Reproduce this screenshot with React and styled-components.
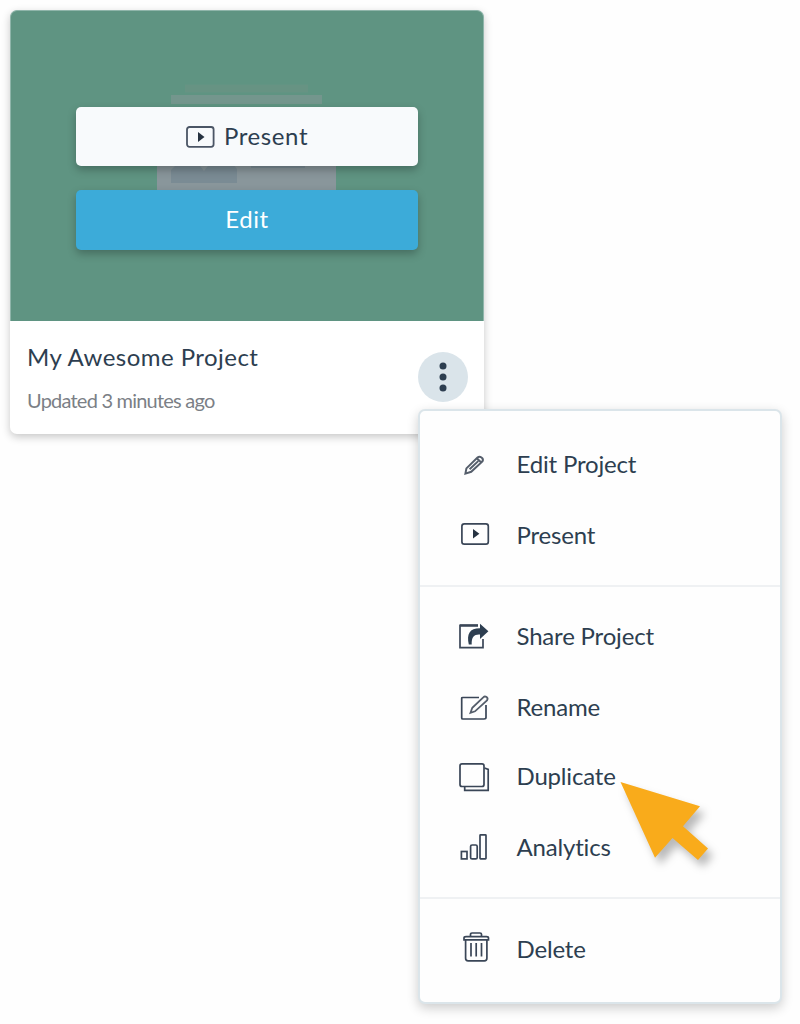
import React, { useState } from "react";
import styled, { createGlobalStyle } from "styled-components";

const GlobalStyle = createGlobalStyle`
    * {
        box-sizing: border-box;
    }
    body {
        margin: 0;
        background: #fefefe;
        font-family: 'Lato', sans-serif;
        color: #2d3e50;
    }
`

const Page = styled.div`
    height: 1024px;
    padding: 10px;
    overflow: hidden;
`

const Card = styled.div`
    width: 474px;
    height: 424px;
    display: flex;
    flex-direction: column;
    background: white;
    border-radius: 7px;
    box-shadow: 0 3px 9px rgba(0, 0, 0, 0.22);
`

const Thumbnail = styled.div`
    position: relative;
    height: 311px;
    padding: 96px 66px 0;
    display: flex;
    flex-direction: column;
    gap: 24px;
    background: #5f9482;
    border: 1px solid #8fb5aa;
    border-width: 1px 1px 0;
    border-radius: 7px 7px 0 0;
`

const Artwork = styled.svg`
    position: absolute;
    left: 146px;
    top: 73px;
`

const CardButton = styled.button`
    position: relative;
    width: 342px;
    height: ${({$primary}) => ($primary ? '60px' : '59px')};
    margin: 0 0 0 -1px;
    padding: 0 0 3px;
    flex-shrink: 0;
    display: flex;
    justify-content: center;
    align-items: center;
    gap: 9px;
    border: none;
    border-radius: 5px;
    background: ${({$primary}) => ($primary ? '#3cabd9' : '#f8fafc')};
    color: ${({$primary}) => ($primary ? 'white' : '#2d3e50')};
    font: 400 24px 'Lato', sans-serif;
    letter-spacing: 0.6px;
    box-shadow: 0 4px 9px rgba(0, 0, 0, 0.26);
    cursor: pointer;
    svg {
        margin-top: 3px;
    }
`

const Info = styled.div`
    flex: 1;
    padding: 0 16px 0 17px;
    display: flex;
    justify-content: space-between;
`

const Title = styled.p`
    margin: 0;
    padding-top: 21px;
    font-size: 24px;
    line-height: 30px;
    letter-spacing: 0.46px;
`

const Updated = styled.p`
    margin: 0;
    padding-top: 16px;
    font-size: 20px;
    line-height: 24px;
    letter-spacing: -0.78px;
    color: #7b7f86;
`

const MenuAnchor = styled.div`
    position: relative;
    margin-top: 31px;
    width: 50px;
    height: 50px;
`

const MoreButton = styled.button`
    width: 50px;
    height: 50px;
    padding: 0;
    display: flex;
    justify-content: center;
    align-items: center;
    border: none;
    border-radius: 50%;
    background: #dae4ea;
    cursor: pointer;
`

const Menu = styled.div`
    position: absolute;
    left: 0;
    top: 57px;
    width: 364px;
    height: 595px;
    padding: 4px 0;
    background: #fefefe;
    border: 2px solid #dbe5ea;
    border-radius: 7px;
    box-shadow: 0 4px 12px rgba(0, 0, 0, 0.2);
`

const MenuGroup = styled.div`
    padding: 14.6px 0 14.2px;
    & + & {
        border-top: 2px solid #eff1f3;
    }
`

const MenuItem = styled.div`
    height: 70.4px;
    padding-left: 39px;
    display: flex;
    align-items: center;
    gap: 25.5px;
    font-size: 24px;
    line-height: 30px;
    letter-spacing: -0.18px;
    cursor: pointer;
`

const ItemText = styled.span`
    padding-bottom: ${({$raised}) => ($raised ? '2px' : '0')};
`

const Icon = styled.svg`
    width: 32px;
    height: 32px;
    overflow: visible;
    fill: none;
    stroke: #3a4657;
    stroke-width: 1.7;
    flex-shrink: 0;
`

const Pointer = styled.svg`
    position: absolute;
    left: 190px;
    top: 360px;
    overflow: visible;
    filter: drop-shadow(5px 7px 4px rgba(0, 0, 0, 0.27));
    pointer-events: none;
`

const PlayIcon = () => (
    <svg width="29" height="22" viewBox="0 0 29 22" fill="none">
        <rect x="1" y="1" width="26.6" height="19.8" rx="2.5" stroke="#4b5565" strokeWidth="1.8"/>
        <path d="M12 6v10l6.5-5z" fill="#263241"/>
    </svg>
)

const icons = {
    edit: (
        <path d="M6.4 24.6l1-5.2L18.5 8.6c2.3-2 6.8.4 4.9 3.9L12.2 22.8zM10.600 20.300l8.600-8.200M18 9.500l4.300 4" stroke="#555e6b" strokeWidth="2"/>
    ),
    present: (
        <>
            <rect x="2.9" y="4.9" width="26.4" height="20.2" rx="2.4"/>
            <path d="M14 10v9.6l6.4-4.8z" fill="#263241" stroke="none"/>
        </>
    ),
    share: (
        <>
            <path d="M19 5.400H1v22.300h23V19"/>
            <path d="M19 5.500H1" strokeWidth="2.400"/>
            <path d="M9.8 24.500C7.500 14 10.500 8.300 21 8.300V3.800l8.400 7.500-8.400 7.600v-4.400c-5.600-.4-8.500 2-8.300 10z" fill="#2d3e50" stroke="none"/>
        </>
    ),
    rename: (
        <>
            <path d="M20 6.500H3.800Q2.700 6.500 2.700 7.500v19.500q0 1 1.100 1H25q2 0 2-1.400V14"/>
            <path d="M11.500 21.800l1.800-5L24.500 6.200c1.600-1.700 5.400.3 3.500 3.300L16 20.300z" stroke="#555e6b" strokeWidth="1.800"/>
        </>
    ),
    duplicate: (
        <>
            <rect x="1" y="2.9" width="24" height="22.6" rx="2"/>
            <path d="M5.700 26v3.400h23.500V8.400L25.500 7"/>
        </>
    ),
    analytics: (
        <>
            <rect x="2.4" y="19.5" width="5.6" height="7.4"/>
            <rect x="11.6" y="13" width="6.6" height="13.9" rx="1.5"/>
            <rect x="21" y="2.8" width="6" height="24.1" rx="0.6"/>
        </>
    ),
    trash: (
        <>
            <path d="M11.5 3.5V1.3q0-1.3 1.5-1.3h8q1.5 0 1.5 1.3v2.2"/>
            <path d="M5 6.8V5.1q0-1.4 2-1.4h20.5q2 0 2 1.4v1.7z"/>
            <path d="M6.6 7v18.3q0 2.6 2.5 2.6h16.3q2.5 0 2.5-2.6V7M12 10v13.5M17.2 10v13.5M22.5 10v13.5"/>
        </>
    )
}

const menuGroups = [
    [
        {icon: 'edit', text: 'Edit Project', raised: true},
        {icon: 'present', text: 'Present'}
    ],
    [
        {icon: 'share', text: 'Share Project'},
        {icon: 'rename', text: 'Rename'},
        {icon: 'duplicate', text: 'Duplicate', raised: true},
        {icon: 'analytics', text: 'Analytics', raised: true}
    ],
    [
        {icon: 'trash', text: 'Delete'}
    ]
]

const App = () => {
    const [isOpen, setIsOpen] = useState(true);

    return(
        <>
            <GlobalStyle/>
            <Page>
                <Card>
                    <Thumbnail>
                        <Artwork width="180" height="140" viewBox="157 84 180 140">
                            <rect x="185" y="84.5" width="123" height="8" fill="#679383"/>
                            <rect x="171" y="95" width="151" height="9" fill="#74968d"/>
                            <rect x="157" y="110" width="179" height="100" fill="#89969b"/>
                            <path d="M171 183v-13l8-8h18l7 9 7-9h20l6 7v14z" fill="#7a8b94"/>
                            <rect x="251" y="158" width="54" height="10" fill="#7a8b94"/>
                        </Artwork>
                        <CardButton><PlayIcon/>Present</CardButton>
                        <CardButton $primary>Edit</CardButton>
                    </Thumbnail>
                    <Info>
                        <div>
                            <Title>My Awesome Project</Title>
                            <Updated>Updated 3 minutes ago</Updated>
                        </div>
                        <MenuAnchor>
                            <MoreButton onClick={() => {setIsOpen(!isOpen)}}>
                                <svg width="8" height="30" viewBox="0 0 8 30" fill="#2d3e50">
                                    <circle cx="4" cy="4" r="3.5"/>
                                    <circle cx="4" cy="15" r="3.5"/>
                                    <circle cx="4" cy="26" r="3.5"/>
                                </svg>
                            </MoreButton>
                            {isOpen ? (
                                <Menu>
                                    {menuGroups.map((group, i) => (
                                        <MenuGroup key={i}>
                                            {group.map(({icon, text, raised}) => (
                                                <MenuItem key={icon}>
                                                    <Icon viewBox="0 0 32 32">{icons[icon]}</Icon>
                                                    <ItemText $raised={raised}>{text}</ItemText>
                                                </MenuItem>
                                            ))}
                                        </MenuGroup>
                                    ))}
                                    <Pointer width="100" height="90" viewBox="610 771 100 90">
                                        <path d="M620.5 782L700 806.2 683 826.3 708 848.5 698 860 672.5 838 655 857.8z" fill="#f9ab1b"/>
                                    </Pointer>
                                </Menu>
                            ) : null}
                        </MenuAnchor>
                    </Info>
                </Card>
            </Page>
        </>
    );
};

export default App;
